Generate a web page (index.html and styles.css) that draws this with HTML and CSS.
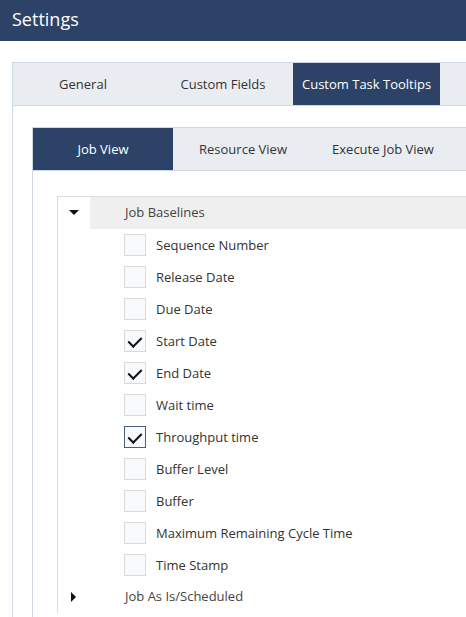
FILE: index.html
```html
<html lang="en">
  <head>
    <meta charset="UTF-8" />
    <meta name="viewport" content="width=device-width, initial-scale=1.0" />
    <title>Settings</title>
    <link rel="stylesheet" href="styles.css">
  </head>
  <body>
    <div class="title-bar">Settings</div>

    <div class="outer">
      <ul class="tabs">
        <li>General</li>
        <li>Custom Fields</li>
        <li class="active">Custom Task Tooltips</li>
        <li class="filler"></li>
      </ul>

      <div class="inner">
        <ul class="tabs">
          <li class="active">Job View</li>
          <li>Resource View</li>
          <li>Execute Job View</li>
          <li>E</li>
        </ul>

        <div class="tree">
          <div class="group open">
            <span class="caret">
              <svg width="10" height="6" viewBox="0 0 10 6"><path d="M0 0h10L5 5z" fill="#111"/></svg>
            </span>
            <span class="group-name">Job Baselines</span>
          </div>
          <ul class="checks">
            <li><span class="box"></span>Sequence Number</li>
            <li><span class="box"></span>Release Date</li>
            <li><span class="box"></span>Due Date</li>
            <li><span class="box checked"></span>Start Date</li>
            <li><span class="box checked"></span>End Date</li>
            <li><span class="box"></span>Wait time</li>
            <li><span class="box checked focus"></span>Throughput time</li>
            <li><span class="box"></span>Buffer Level</li>
            <li><span class="box"></span>Buffer</li>
            <li><span class="box"></span>Maximum Remaining Cycle Time</li>
            <li><span class="box"></span>Time Stamp</li>
          </ul>
          <div class="group">
            <span class="caret">
              <svg width="6" height="10" viewBox="0 0 6 10"><path d="M0 0v10l5-5z" fill="#111"/></svg>
            </span>
            <span class="group-name">Job As Is/Scheduled</span>
          </div>
        </div>
      </div>
    </div>
  </body>
</html>
```

FILE: styles.css
```css
* {
  margin: 0;
  padding: 0;
  box-sizing: border-box;
}
ul {
  list-style: none;
}
body {
  font-family: "Open Sans", "Noto Sans", sans-serif;
  font-size: 13px;
  color: #333;
  background: #fff;
  overflow: hidden;
  width: 466px;
  height: 617px;
}
.title-bar {
  height: 41px;
  background: #2c4367;
  color: #fff;
  font-size: 18px;
  line-height: 39px;
  padding-left: 12px;
}

/* panels */
.outer {
  margin: 21px 0 0 12px;
  width: 700px;
  height: 600px;
  border-left: 1px solid #cfd7e2;
  border-top: 1px solid #cfd7e2;
  padding-left: 19px;
}
.outer > .tabs {
  margin-left: -19px;
  margin-bottom: 21px;
}
.inner {
  width: 660px;
  height: 600px;
  border-left: 1px solid #cfd7e2;
  border-top: 1px solid #cfd7e2;
  padding-left: 24px;
}
.inner > .tabs {
  margin-left: -24px;
  margin-bottom: 25px;
}

/* tabs */
.tabs {
  display: flex;
  height: 43px;
  background: #e9edf2;
  border-bottom: 1px solid #cfd7e2;
}
.tabs li {
  min-width: 140px;
  padding: 0 9px;
  text-align: center;
  line-height: 42px;
  white-space: nowrap;
}
.tabs .active {
  background: #2c4367;
  color: #fff;
}
.tabs .filler {
  flex: 1;
}

/* tree */
.tree {
  border-left: 1px solid #dcdcdc;
  border-top: 1px solid #dcdcdc;
  width: 600px;
}
.group {
  display: flex;
  height: 32px;
  align-items: center;
}
.caret {
  width: 32px;
  height: 32px;
  display: flex;
  align-items: center;
  justify-content: center;
  background: #fff;
}
.group-name {
  flex: 1;
  height: 32px;
  line-height: 31px;
  padding-left: 35px;
  color: #444;
}
.group.open .group-name {
  background: #efefef;
}
.checks li {
  display: flex;
  align-items: center;
  height: 32px;
  padding-left: 66px;
}
.box {
  width: 22px;
  height: 22px;
  border: 1px solid #d6dbe0;
  background: #f8f9fb;
  margin-right: 10px;
  position: relative;
}
.box.focus {
  border-color: #4d5f78;
}
.box.checked::after {
  content: "";
  position: absolute;
  left: 6px;
  top: 3px;
  width: 6px;
  height: 11px;
  border-right: 2px solid #111;
  border-bottom: 2px solid #111;
  transform: rotate(45deg);
}
```
